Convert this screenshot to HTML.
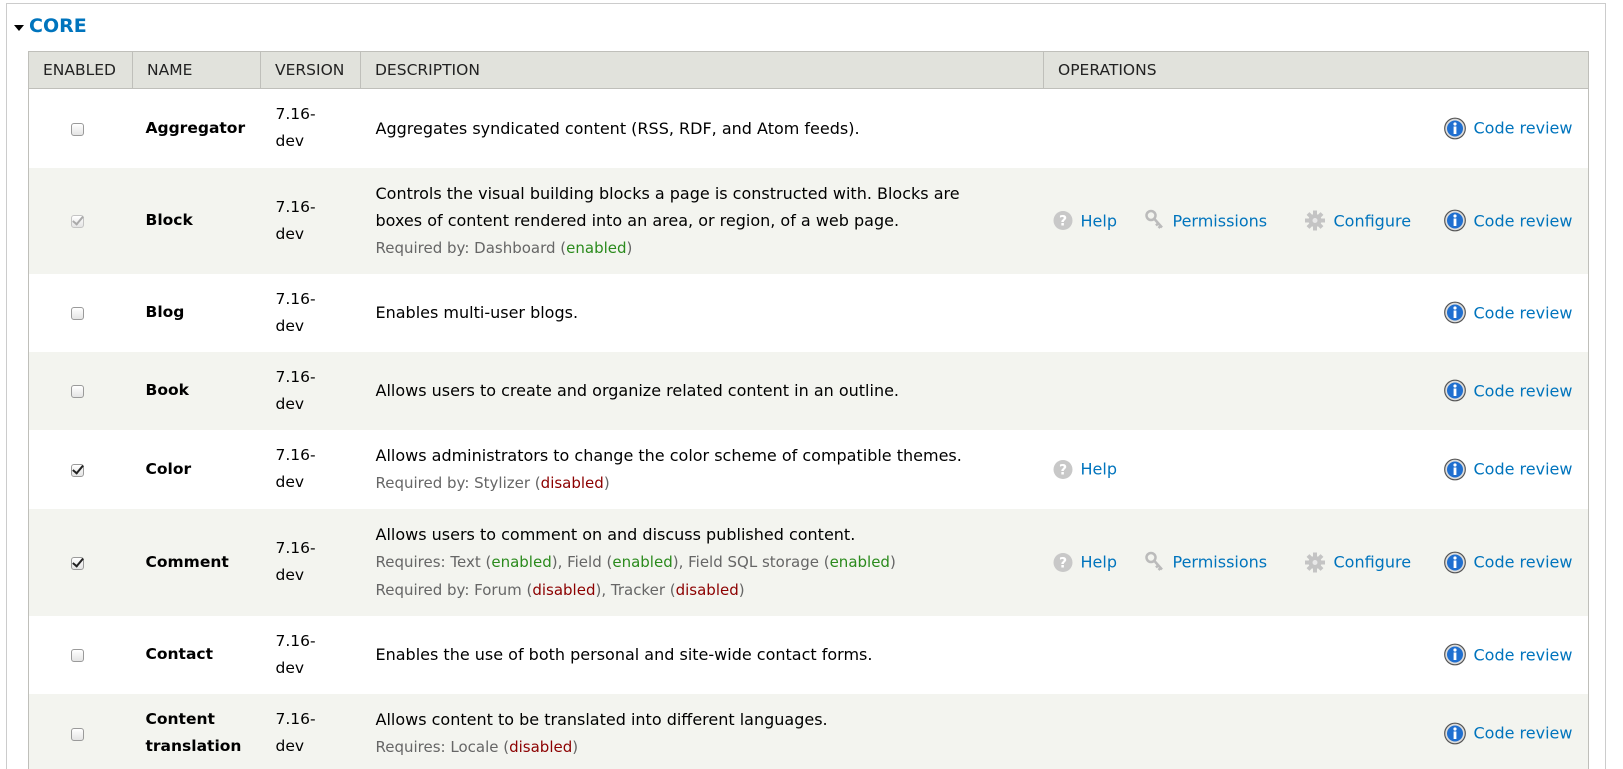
<!DOCTYPE html>
<html><head><meta charset="utf-8">
<style>
html,body{margin:0;padding:0;background:#fff;width:1623px;height:769px;overflow:hidden}
body{font-family:"DejaVu Sans","Liberation Sans",sans-serif;color:#000;position:relative}
.fs{position:absolute;left:6px;top:3px;width:1598px;height:800px;border:1px solid #ccc;border-bottom:none}
.legend{position:absolute;left:13px;top:15px;font-size:19px;font-weight:bold;color:#0074bd;font-family:"DejaVu Sans",sans-serif}
.tri{position:absolute;left:14px;top:25px;width:0;height:0;border-left:5px solid transparent;border-right:5px solid transparent;border-top:6px solid #000}
table{position:absolute;left:28px;top:51px;width:1561px;border-collapse:collapse;border:1px solid #bfbfba;font-size:16px}
th{background:#e1e2dc;height:36px;padding:0 0 0 14px;text-align:left;font-weight:normal;font-size:15.5px;border:1px solid #bfbfba;color:#222}
td{padding:12px 0 12px 15px;line-height:27px;vertical-align:middle}
td.v{font-size:15.5px}
tr.w td{background:#fff}
tr.g td{background:#f3f4ef}
td.c{padding-left:0;text-align:center;padding-right:6px}
td.n{font-weight:bold;padding-left:13px;line-height:27px;font-size:15.5px}
.cb{display:inline-block;width:11px;height:11px;border:1px solid #9a9a9a;border-radius:3px;background:linear-gradient(#fff,#e4e4e4);position:relative;vertical-align:middle}
.cb.k::after{content:"";position:absolute;left:3px;top:-2px;width:4px;height:9px;border:solid #222;border-width:0 2px 2px 0;transform:rotate(40deg)}
.cb.d{border-color:#c4c4c4}
.cb.d::after{border-color:#aaa}
.s{font-size:15px;color:#666}
.en{color:#2a8a1c}.di{color:#8c0000}
td.o{position:relative;padding:0}
.op{position:absolute;top:50%;transform:translateY(-50%);color:#0074bd;font-size:16px;white-space:nowrap;display:flex;align-items:center}
.op svg{margin-right:8px}
</style></head><body>
<div class="fs"></div>
<div class="tri"></div>
<div class="legend" style="left:29px">CORE</div>
<table>
<colgroup><col style="width:104px"><col style="width:128px"><col style="width:100px"><col style="width:683px"><col></colgroup>
<tr><th>ENABLED</th><th>NAME</th><th>VERSION</th><th>DESCRIPTION</th><th>OPERATIONS</th></tr>

<tr class="w" style="height:79px"><td class="c"><span class="cb"></span></td><td class="n">Aggregator</td><td class="v">7.16-<br>dev</td><td>Aggregates syndicated content (RSS, RDF, and Atom feeds).</td><td class="o">CR</td></tr>

<tr class="g" style="height:106px"><td class="c"><span class="cb k d"></span></td><td class="n">Block</td><td class="v">7.16-<br>dev</td><td>Controls the visual building blocks a page is constructed with. Blocks are<br>boxes of content rendered into an area, or region, of a web page.<br><span class="s">Required by: Dashboard (<span class="en">enabled</span>)</span></td><td class="o">HPC CR</td></tr>

<tr class="w" style="height:78px"><td class="c"><span class="cb"></span></td><td class="n">Blog</td><td class="v">7.16-<br>dev</td><td>Enables multi-user blogs.</td><td class="o">CR</td></tr>

<tr class="g" style="height:77px"><td class="c"><span class="cb"></span></td><td class="n">Book</td><td class="v">7.16-<br>dev</td><td>Allows users to create and organize related content in an outline.</td><td class="o">CR</td></tr>

<tr class="w" style="height:79px"><td class="c"><span class="cb k"></span></td><td class="n">Color</td><td class="v">7.16-<br>dev</td><td>Allows administrators to change the color scheme of compatible themes.<br><span class="s">Required by: Stylizer (<span class="di">disabled</span>)</span></td><td class="o">H CR</td></tr>

<tr class="g" style="height:106px"><td class="c"><span class="cb k"></span></td><td class="n">Comment</td><td class="v">7.16-<br>dev</td><td>Allows users to comment on and discuss published content.<br><span class="s">Requires: Text (<span class="en">enabled</span>), Field (<span class="en">enabled</span>), Field SQL storage (<span class="en">enabled</span>)<br>Required by: Forum (<span class="di">disabled</span>), Tracker (<span class="di">disabled</span>)</span></td><td class="o">HPC CR</td></tr>

<tr class="w" style="height:78px"><td class="c"><span class="cb"></span></td><td class="n">Contact</td><td class="v">7.16-<br>dev</td><td>Enables the use of both personal and site-wide contact forms.</td><td class="o">CR</td></tr>

<tr class="g" style="height:79px"><td class="c"><span class="cb"></span></td><td class="n">Content translation</td><td class="v">7.16-<br>dev</td><td>Allows content to be translated into different languages.<br><span class="s">Requires: Locale (<span class="di">disabled</span>)</span></td><td class="o">CR</td></tr>
</table>

<script>
var help='<span class="op" style="left:9px"><svg width="20" height="20" viewBox="0 0 20 20"><circle cx="10" cy="10" r="9.5" fill="#c8c8c8"/><text x="10" y="15" text-anchor="middle" font-size="14" font-weight="bold" fill="#fff" font-family="DejaVu Sans">?</text></svg>Help</span>';
var perm='<span class="op" style="left:101px"><svg width="20" height="22" viewBox="0 0 20 22"><circle cx="6" cy="6" r="4.5" fill="none" stroke="#bbb" stroke-width="2.5"/><path d="M9 9 L17 18 M13 14 L11 16 M15.5 16.5 L13.5 18.5" stroke="#bbb" stroke-width="2.5" fill="none"/></svg>Permissions</span>';
var conf='<span class="op" style="left:260px"><svg width="22" height="22" viewBox="0 0 22 22"><g stroke="#c4c4c4" stroke-width="4"><path d="M11 1V21M1 11H21M4 4L18 18M18 4L4 18"/></g><circle cx="11" cy="11" r="6.5" fill="#c4c4c4"/><circle cx="11" cy="11" r="2.5" fill="#e8e8e8"/></svg>Configure</span>';
var cr='<span class="op" style="left:400px"><svg width="22" height="22" viewBox="0 0 22 22"><circle cx="11" cy="11" r="10.3" fill="#ddd" stroke="#555" stroke-width="1.2"/><circle cx="11" cy="11" r="8" fill="#1f6fd0"/><circle cx="11" cy="6.5" r="1.6" fill="#fff"/><rect x="9.6" y="9" width="2.8" height="7.5" fill="#fff"/></svg>Code review</span>';
document.querySelectorAll('td.o').forEach(function(td){
 var t=td.textContent,h='';
 if(t.indexOf('H')>=0)h+=help;
 if(t.indexOf('HPC')>=0)h+=perm+conf;
 h+=cr; td.innerHTML=h;
});
</script>
</body></html>
